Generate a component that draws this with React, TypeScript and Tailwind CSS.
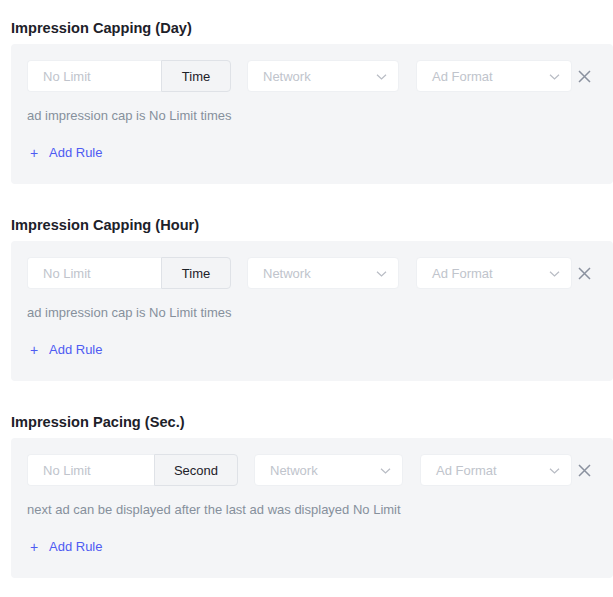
import React from "react";

function Chevron() {
  return (
    <svg width="11" height="6" viewBox="0 0 11 6" fill="none" className="shrink-0">
      <path d="M1 0.8L5.5 5L10 0.8" stroke="#b8bcc4" strokeWidth="1.2" />
    </svg>
  );
}

function CloseIcon() {
  return (
    <svg width="13" height="13" viewBox="0 0 13 13" fill="none" className="shrink-0">
      <path d="M1 1L12 12M12 1L1 12" stroke="#8a919f" strokeWidth="1.5" />
    </svg>
  );
}

type SectionProps = {
  title: string;
  unit: string;
  desc: string;
  inputW: string;
  unitW: string;
  netW: string;
  fmtW: string;
  gap2: string;
};

function Section({ title, unit, desc, inputW, unitW, netW, fmtW, gap2 }: SectionProps) {
  return (
    <div className="mb-[30px]">
      <div className="h-5 text-[14.6px] leading-5 font-bold text-[#1d2129] mb-[7px] pt-px">{title}</div>
      <div className="bg-[#f4f5f7] rounded-[4px] px-4 pt-4 pb-[15px]">
        <div className="flex items-center h-8">
          <div className="flex h-8">
            <div
              className={`${inputW} h-8 bg-white border border-[#eef0f3] border-r-0 rounded-l-[4px] flex items-center pl-[15px] pt-px text-[13px] text-[#c0c4cc]`}
            >
              No Limit
            </div>
            <div
              className={`${unitW} h-8 bg-[#f3f4f6] border border-[#dfe2e7] rounded-r-[4px] flex items-center justify-center pt-px text-[13px] text-[#1d2129]`}
            >
              {unit}
            </div>
          </div>
          <div
            className={`${netW} ml-4 h-8 bg-white border border-[#eef0f3] rounded-[4px] flex items-center justify-between pl-[15px] pr-[11px] pt-px text-[13px] text-[#c0c4cc]`}
          >
            <span>Network</span>
            <Chevron />
          </div>
          <div
            className={`${fmtW} ${gap2} h-8 bg-white border border-[#eef0f3] rounded-[4px] flex items-center justify-between pl-[15px] pr-[11px] pt-px text-[13px] text-[#c0c4cc]`}
          >
            <span>Ad Format</span>
            <Chevron />
          </div>
          <div className="ml-[6px] w-[13px] flex items-center">
            <CloseIcon />
          </div>
        </div>
        <div className="mt-[14px] text-[13px] leading-5 text-[#86909c]">{desc}</div>
        <div className="mt-[11px] h-8 flex items-center text-[13px] text-[#4e5bf2]">
          <span className="ml-[3px] w-[19px] text-[14px]">+</span>
          <span>Add Rule</span>
        </div>
      </div>
    </div>
  );
}

export default function App() {
  return (
    <div
      className="bg-white w-[613px] h-[597px] overflow-hidden pl-[11px] pt-[17px]"
      style={{ fontFamily: '"Liberation Sans", Arial, sans-serif' }}
    >
      <Section
        title="Impression Capping (Day)"
        unit="Time"
        desc="ad impression cap is No Limit times"
        inputW="w-[134px]"
        unitW="w-[70px]"
        netW="w-[152px]"
        fmtW="w-[156px]"
        gap2="ml-[17px]"
      />
      <Section
        title="Impression Capping (Hour)"
        unit="Time"
        desc="ad impression cap is No Limit times"
        inputW="w-[134px]"
        unitW="w-[70px]"
        netW="w-[152px]"
        fmtW="w-[156px]"
        gap2="ml-[17px]"
      />
      <Section
        title="Impression Pacing (Sec.)"
        unit="Second"
        desc="next ad can be displayed after the last ad was displayed No Limit"
        inputW="w-[127px]"
        unitW="w-[84px]"
        netW="w-[149px]"
        fmtW="w-[152px]"
        gap2="ml-[17px]"
      />
    </div>
  );
}
